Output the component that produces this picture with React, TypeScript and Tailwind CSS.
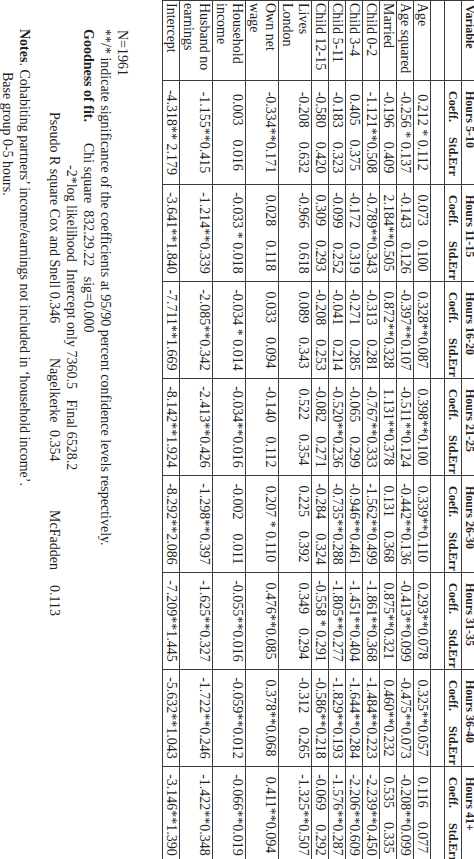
const rows: { label: React.ReactNode; cells: string[] }[] = [
  { label: "Age", cells: ["0.212 * 0.112", "0.073    0.100", "0.328**0.087", "0.398**0.100", "0.339**0.110", "0.293**0.078", "0.325**0.057", "0.116    0.077"] },
  { label: "Age squared", cells: ["-0.256 * 0.137", "-0.143    0.126", "-0.397**0.107", "-0.511**0.124", "-0.442**0.136", "-0.413**0.099", "-0.475**0.073", "-0.208**0.099"] },
  { label: "Married", cells: ["-0.196    0.409", "2.184**0.505", "0.872**0.328", "1.131**0.378", "0.131    0.368", "0.875**0.321", "0.460**0.232", "0.535    0.335"] },
  { label: "Child 0-2", cells: ["-1.121**0.508", "-0.789**0.343", "-0.313    0.281", "-0.767**0.333", "-1.562**0.499", "-1.861**0.368", "-1.484**0.223", "-2.239**0.450"] },
  { label: "Child 3-4", cells: ["0.405    0.375", "-0.172    0.319", "-0.271    0.285", "-0.065    0.299", "-0.946**0.461", "-1.451**0.404", "-1.644**0.284", "-2.206**0.609"] },
  { label: "Child 5-11", cells: ["-0.183    0.323", "-0.099    0.252", "-0.041    0.214", "-0.520**0.236", "-0.735**0.288", "-1.805**0.277", "-1.829**0.193", "-1.576**0.287"] },
  { label: "Child 12-15", cells: ["-0.580    0.420", "0.309    0.293", "-0.208    0.253", "-0.082    0.271", "-0.284    0.324", "-0.558 * 0.291", "-0.586**0.218", "-0.069    0.292"] },
  { label: <>Lives<br />London</>, cells: ["-0.208    0.632", "-0.966    0.618", "0.089    0.343", "0.522    0.354", "0.225    0.392", "0.349    0.294", "-0.312    0.265", "-1.325**0.507"] },
  { label: <>Own net<br />wage</>, cells: ["-0.334**0.171", "0.028    0.118", "0.033    0.094", "-0.140    0.112", "0.207 * 0.110", "0.476**0.085", "0.378**0.068", "0.411**0.094"] },
  { label: <>Household<br />income</>, cells: ["0.003    0.016", "-0.033 * 0.018", "-0.034 * 0.014", "-0.034**0.016", "-0.002    0.011", "-0.055**0.016", "-0.059**0.012", "-0.066**0.019"] },
  { label: <>Husband no<br />earnings</>, cells: ["-1.155**0.415", "-1.214**0.339", "-2.085**0.342", "-2.413**0.426", "-1.298**0.397", "-1.625**0.327", "-1.722**0.246", "-1.422**0.348"] },
  { label: "Intercept", cells: ["-4.318** 2.179", "-3.641**1.840", "-7.711**1.669", "-8.142**1.924", "-8.292**2.086", "-7.209**1.445", "-5.632**1.043", "-3.146**1.390"] },
];

const hours = ["Hours 5-10", "Hours 11-15", "Hours 16-20", "Hours 21-25", "Hours 26-30", "Hours 31-35", "Hours 36-40", "Hours 41+"];

const cell = "border border-[#3a3a3a] p-0 align-top";

export default function App() {
  return (
    <div className="w-[474px] h-[859px] overflow-hidden bg-white">
      {/* the page is scanned sideways: lay it out landscape and turn it */}
      <div className="w-[859px] h-[474px] origin-top-left translate-x-[474px] rotate-90 overflow-hidden bg-white text-[#1f1f1f] font-['Liberation_Serif',serif]">
        <table className="-mt-[4px] border-collapse table-fixed w-[863px]">
          <colgroup>
            <col className="w-[80px]" />
            <col className="w-[104px]" />
            {hours.slice(1).map((h) => (
              <col key={h} className="w-[97px]" />
            ))}
          </colgroup>
          <tbody>
            <tr>
              <td className={`${cell} pl-[4px] text-[12px] leading-[15px] font-bold`}>Variable</td>
              {hours.map((h) => (
                <td key={h} className={`${cell} pl-[10px] text-[12px] leading-[15px] font-bold`}>
                  {h}
                </td>
              ))}
            </tr>
            <tr>
              <td className={cell} />
              {hours.map((h) => (
                <td key={h} className={`${cell} pl-[10px] text-[12px] leading-[16px] font-bold`}>
                  <div className="flex">
                    <span className="w-[46px]">Coeff.</span>
                    <span>Std.Err</span>
                  </div>
                </td>
              ))}
            </tr>
            <tr>
              <td className={`${cell} h-[14px]`} />
              {hours.map((h) => (
                <td key={h} className={`${cell} h-[14px]`} />
              ))}
            </tr>
            {rows.map((r, i) => (
              <tr key={i}>
                <td className={`${cell} pl-[2px] text-[14px] leading-[16px]`}>{r.label}</td>
                {r.cells.map((c, j) => (
                  <td key={j} className={`${cell} text-center text-[14px] leading-[16px] whitespace-pre`}>
                    {c}
                  </td>
                ))}
              </tr>
            ))}
          </tbody>
        </table>

        <div className="mt-[31px] text-[14px] leading-[17px] whitespace-pre">
          <div className="pl-[30px]">N=1961</div>
          <div className="pl-[29px]">**/* indicate significance of the coefficients at 95/90 percent confidence levels respectively.</div>
          <div className="pl-[29px] flex">
            <span className="w-[114px] font-bold">Goodness of fit.</span>
            <span>Chi square  832.29.22   sig=0.000</span>
          </div>
          <div className="pl-[165px]">-2*log likelihood  Intercept only 7360.5   Final 6528.2</div>
          <div className="pl-[112px] flex">
            <span className="w-[246px]">Pseudo R square Cox and Snell 0.346</span>
            <span className="w-[72px]">Nagelkerke</span>
            <span className="w-[80px]">0.354</span>
            <span className="w-[75px]">McFadden</span>
            <span>0.113</span>
          </div>
          <div className="pl-[29px] mt-[13px]">
            <span className="font-bold">Notes</span>. Cohabiting partners’ income/earnings not included in ‘household income’.
          </div>
          <div className="pl-[72px]">Base group 0-5 hours.</div>
        </div>
      </div>
    </div>
  );
}
